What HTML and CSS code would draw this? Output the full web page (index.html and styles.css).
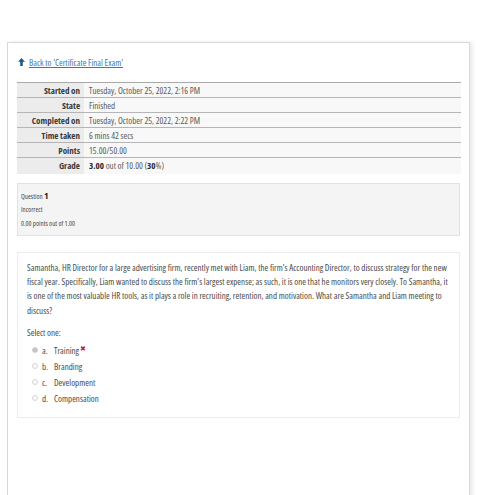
FILE: index.html
```html
<!DOCTYPE html>
<html>
<head>
<meta charset="utf-8">
<link rel="stylesheet" href="styles.css">
</head>
<body>
<div class="card">
  <div class="back">
    <svg class="arrow" width="7" height="8" viewBox="0 0 7 8"><path d="M3.5 0 L7 3.8 L4.8 3.8 L4.8 8 L2.2 8 L2.2 3.8 L0 3.8 Z" fill="#1d5a8a"/></svg>
    <a href="#">Back to 'Certificate Final Exam'</a>
  </div>
  <table class="summary">
    <tr><th>Started on</th><td>Tuesday, October 25, 2022, 2:16 PM</td></tr>
    <tr><th>State</th><td>Finished</td></tr>
    <tr><th>Completed on</th><td>Tuesday, October 25, 2022, 2:22 PM</td></tr>
    <tr><th>Time taken</th><td>6 mins 42 secs</td></tr>
    <tr><th>Points</th><td>15.00/50.00</td></tr>
    <tr class="last"><th>Grade</th><td><b>3.00</b> out of 10.00 (<b>30</b>%)</td></tr>
  </table>
  <div class="info">
    <div class="qno">Question <span>1</span></div>
    <div class="state">Incorrect</div>
    <div class="grade">0.00 points out of 1.00</div>
  </div>
  <div class="content">
    <p class="qtext">Samantha, HR Director for a large advertising firm, recently met with Liam, the firm's Accounting Director, to discuss strategy for the new fiscal year. Specifically, Liam wanted to discuss the firm's largest expense; as such, it is one that he monitors very closely. To Samantha, it is one of the most valuable HR tools, as it plays a role in recruiting, retention, and motivation. What are Samantha and Liam meeting to discuss?</p>
    <div class="prompt">Select one:</div>
    <div class="answer">
      <div class="opt"><span class="radio checked"></span><span class="let">a.</span><span>Training</span><span class="cross">✖</span></div>
      <div class="opt"><span class="radio"></span><span class="let">b.</span><span>Branding</span></div>
      <div class="opt"><span class="radio"></span><span class="let">c.</span><span>Development</span></div>
      <div class="opt"><span class="radio"></span><span class="let">d.</span><span>Compensation</span></div>
    </div>
  </div>
</div>
</body>
</html>
```
FILE: styles.css
```css
html, body {
  margin: 0;
  padding: 0;
  background: #ffffff;
}
body {
  font-family: "Open Sans", "Liberation Sans", sans-serif;
  font-stretch: 75%;
  font-size: 9px;
  color: #555;
  overflow: hidden;
  height: 495px;
}
.card {
  margin: 42px 0 0 7px;
  width: 443px;
  height: 480px;
  border: 1px solid #d8d8d8;
  box-shadow: 3px 0 4px rgba(0,0,0,0.08);
  padding: 12px 9px 0 9px;
}
.back {
  display: flex;
  align-items: center;
  gap: 4px;
  height: 14px;
  padding-left: 1px;
}
.back a {
  color: #3a78b5;
  text-decoration: underline;
  font-size: 9px;
}
.summary {
  margin-top: 13px;
  width: 444px;
  border-collapse: collapse;
  border-top: 1px solid #a9a9a9;
}
.summary tr {
  height: 15px;
  border-bottom: 1px solid #b5b5b5;
}
.summary tr.last {
  border-bottom: none;
  height: 16px;
}
.summary th {
  width: 63px;
  background: #ececec;
  text-align: right;
  font-weight: 700;
  color: #3a3a3a;
  padding: 0 4px 0 0;
  white-space: nowrap;
}
.summary td {
  background: #f8f8f8;
  padding: 0 0 0 5px;
  color: #5a5a5a;
}
.summary td b {
  color: #2a2a2a;
}
.info {
  margin-top: 9px;
  background: #f4f4f4;
  border: 1px solid #e2e2e2;
  height: 51px;
  padding: 0 0 0 3px;
  font-size: 7px;
  color: #4a4a4a;
}
.qno {
  margin-top: 5px;
  height: 10px;
}
.qno span {
  font-size: 9.5px;
  font-weight: 700;
  color: #222;
}
.state {
  margin-top: 6px;
}
.grade {
  margin-top: 5px;
}
.content {
  margin-top: 16px;
  border: 1px solid #ececec;
  height: 156px;
  padding: 8px 10px 0 9px;
}
.qtext {
  margin: 0;
  line-height: 14.4px;
  color: #4a4a4a;
}
.prompt {
  margin-top: 8px;
  color: #4a4a4a;
}
.answer {
  margin-top: 3px;
  padding-left: 5px;
}
.opt {
  display: flex;
  align-items: center;
  height: 16px;
  color: #4a4a4a;
}
.radio {
  width: 4px;
  height: 4px;
  border: 1px solid #d6d6d6;
  border-radius: 50%;
  background: #fafafa;
  margin-right: 4px;
}
.radio.checked {
  background: #c4c4c4;
  border-color: #d0d0d0;
}
.let {
  width: 12px;
}
.cross {
  color: #c81e1e;
  font-size: 7px;
  margin-left: 1px;
  position: relative;
  top: -2px;
}
```
